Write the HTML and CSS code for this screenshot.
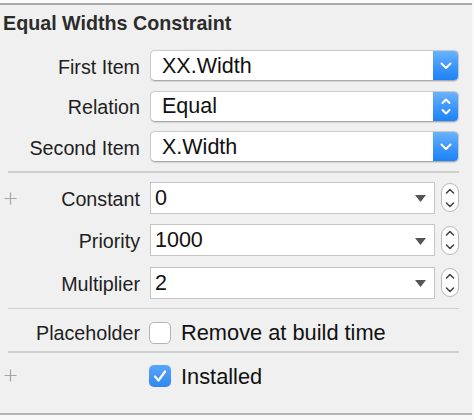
FILE: index.html
```html
<!DOCTYPE html>
<html>
<head>
<meta charset="utf-8">
<link rel="stylesheet" href="styles.css">
</head>
<body>
<div class="frame">
  <div class="panel">
    <h1 class="title">Equal Widths Constraint</h1>

    <div class="group items">
      <div class="row">
        <div class="lblcell"><span class="lbl">First Item</span></div>
        <div class="popup">
          <span class="val">XX.Width</span>
          <span class="pbtn"><svg width="26" height="31" viewBox="0 0 26 31"><polyline points="8.5,13.5 13,18 17.5,13.5" fill="none" stroke="#fff" stroke-width="2" stroke-linecap="round" stroke-linejoin="round"/></svg></span>
        </div>
      </div>
      <div class="row">
        <div class="lblcell"><span class="lbl">Relation</span></div>
        <div class="popup">
          <span class="val">Equal</span>
          <span class="pbtn"><svg width="26" height="31" viewBox="0 0 26 31"><polyline points="9.5,12 13,8.5 16.5,12" fill="none" stroke="#fff" stroke-width="2" stroke-linecap="round" stroke-linejoin="round"/><polyline points="9.5,19 13,22.5 16.5,19" fill="none" stroke="#fff" stroke-width="2" stroke-linecap="round" stroke-linejoin="round"/></svg></span>
        </div>
      </div>
      <div class="row">
        <div class="lblcell"><span class="lbl">Second Item</span></div>
        <div class="popup">
          <span class="val">X.Width</span>
          <span class="pbtn"><svg width="26" height="31" viewBox="0 0 26 31"><polyline points="8.5,13.5 13,18 17.5,13.5" fill="none" stroke="#fff" stroke-width="2" stroke-linecap="round" stroke-linejoin="round"/></svg></span>
        </div>
      </div>
    </div>

    <div class="sep"></div>

    <div class="group values">
      <div class="row">
        <div class="lblcell"><svg class="plus" width="13" height="13" viewBox="0 0 13 13"><path d="M6.5 0.5V12.5M0.5 6.5H12.5" stroke="#a6a6a6" stroke-width="1.2"/></svg><span class="lbl">Constant</span></div>
        <div class="combo-wrap">
          <div class="combo"><span class="val">0</span><svg class="tri" width="11" height="7" viewBox="0 0 11 7"><polygon points="0,0 11,0 5.5,7" fill="#555"/></svg></div>
          <div class="stepper"><svg width="18" height="28" viewBox="0 0 18 28"><polyline points="5.5,9 9,5.5 12.5,9" fill="none" stroke="#444" stroke-width="1.6" stroke-linecap="round" stroke-linejoin="round"/><polyline points="5.5,19 9,22.5 12.5,19" fill="none" stroke="#444" stroke-width="1.6" stroke-linecap="round" stroke-linejoin="round"/></svg></div>
        </div>
      </div>
      <div class="row">
        <div class="lblcell"><span class="lbl">Priority</span></div>
        <div class="combo-wrap">
          <div class="combo"><span class="val">1000</span><svg class="tri" width="11" height="7" viewBox="0 0 11 7"><polygon points="0,0 11,0 5.5,7" fill="#555"/></svg></div>
          <div class="stepper"><svg width="18" height="28" viewBox="0 0 18 28"><polyline points="5.5,9 9,5.5 12.5,9" fill="none" stroke="#444" stroke-width="1.6" stroke-linecap="round" stroke-linejoin="round"/><polyline points="5.5,19 9,22.5 12.5,19" fill="none" stroke="#444" stroke-width="1.6" stroke-linecap="round" stroke-linejoin="round"/></svg></div>
        </div>
      </div>
      <div class="row">
        <div class="lblcell"><span class="lbl">Multiplier</span></div>
        <div class="combo-wrap">
          <div class="combo"><span class="val">2</span><svg class="tri" width="11" height="7" viewBox="0 0 11 7"><polygon points="0,0 11,0 5.5,7" fill="#555"/></svg></div>
          <div class="stepper"><svg width="18" height="28" viewBox="0 0 18 28"><polyline points="5.5,9 9,5.5 12.5,9" fill="none" stroke="#444" stroke-width="1.6" stroke-linecap="round" stroke-linejoin="round"/><polyline points="5.5,19 9,22.5 12.5,19" fill="none" stroke="#444" stroke-width="1.6" stroke-linecap="round" stroke-linejoin="round"/></svg></div>
        </div>
      </div>
    </div>

    <div class="sep sep2"></div>

    <div class="row check-row">
      <div class="lblcell"><span class="lbl">Placeholder</span></div>
      <div class="checkline"><span class="box"></span><span class="ctext">Remove at build time</span></div>
    </div>

    <div class="sep sep3"></div>

    <div class="row check-row">
      <div class="lblcell"><svg class="plus" width="13" height="13" viewBox="0 0 13 13"><path d="M6.5 0.5V12.5M0.5 6.5H12.5" stroke="#a6a6a6" stroke-width="1.2"/></svg></div>
      <div class="checkline"><span class="box on"><svg width="22" height="22" viewBox="0 0 22 22"><polyline points="6,11.5 9.5,15.5 16,6.5" fill="none" stroke="#fff" stroke-width="2.2" stroke-linecap="round" stroke-linejoin="round"/></svg></span><span class="ctext">Installed</span></div>
    </div>
  </div>
</div>
</body>
</html>
```

FILE: styles.css
```css
html, body {
  margin: 0;
  padding: 0;
}
body {
  width: 474px;
  height: 420px;
  background: #f9f9f9;
  font-family: "Liberation Sans", Arial, sans-serif;
  overflow: hidden;
}
.frame {
  padding-top: 3px;
  width: 472px;
  background: #fbfbfb;
}
.panel {
  box-sizing: border-box;
  width: 472px;
  height: 412px;
  background: #f0f0f0;
  border-top: 2px solid #a9a9a9;
  border-bottom: 2px solid #b4b4b4;
  display: flex;
  flex-direction: column;
}
.title {
  margin: 6px 0 0 0;
  padding-left: 3px;
  font-size: 19.7px;
  line-height: 24px;
  font-weight: bold;
  color: #2c2c2c;
}
.group {
  display: flex;
  flex-direction: column;
}
.items {
  margin-top: 15px;
  gap: 9.5px;
}
.values {
  margin-top: 9px;
  gap: 10.5px;
}
.row {
  display: grid;
  grid-template-columns: 150px 309px;
  align-items: center;
}
.lblcell {
  display: flex;
  align-items: center;
  justify-content: space-between;
  padding: 3px 10px 0 4px;
  box-sizing: border-box;
  height: 31px;
}
.lbl {
  margin-left: auto;
  font-size: 19.7px;
  color: #1e1e1e;
}
.plus {
  flex: none;
  margin-top: -2px;
}
.popup {
  box-sizing: border-box;
  height: 31px;
  display: flex;
  align-items: stretch;
  background: #fff;
  border: 1px solid #cbcbcb;
  border-bottom-color: #a9a9a9;
  border-radius: 5px;
  box-shadow: 0 0.5px 1px rgba(0,0,0,0.12);
  overflow: hidden;
}
.val {
  flex: 1;
  font-size: 21.5px;
  color: #111;
  padding-left: 11px;
  padding-top: 1px;
  display: flex;
  align-items: center;
}
.pbtn {
  width: 26px;
  margin: -1px -1px -1px 0;
  background: linear-gradient(#6db5fb, #3f98fb 50%, #1b80f8);
  border-radius: 0 5px 5px 0;
  display: flex;
  align-items: center;
  justify-content: center;
}
.combo-wrap {
  display: flex;
  align-items: center;
  gap: 6px;
}
.combo {
  box-sizing: border-box;
  width: 286px;
  height: 32px;
  background: #fff;
  border: 1.5px solid #c4c4c4;
  display: flex;
  align-items: center;
}
.combo .val {
  padding-left: 4px;
}
.tri {
  margin-right: 8px;
  margin-top: 2px;
}
.stepper {
  box-sizing: border-box;
  width: 18px;
  height: 29px;
  border: 1px solid #b9b9b9;
  border-radius: 9px;
  background: #fff;
  display: flex;
  align-items: center;
  justify-content: center;
  overflow: hidden;
}
.stepper svg {
  flex: none;
}
.sep {
  height: 1.5px;
  background: #cfcfcf;
  margin-left: 8px;
  width: 451px;
}
.items + .sep {
  margin-top: 9px;
}
.sep2 {
  margin-top: 9px;
}
.check-row {
  height: 22px;
  margin: 10px 0;
}
.check-row .lblcell {
  height: 22px;
  padding-top: 1px;
}
.checkline {
  display: flex;
  align-items: center;
  gap: 10px;
  margin-left: -1px;
}
.box {
  box-sizing: border-box;
  width: 22px;
  height: 22px;
  border: 1px solid #b3b3b3;
  border-radius: 5px;
  background: #fff;
  display: flex;
}
.box.on {
  border: none;
  background: linear-gradient(#5aa6f8, #2f87f2);
}
.ctext {
  font-size: 21.8px;
  color: #111;
  padding-top: 1px;
}
```
